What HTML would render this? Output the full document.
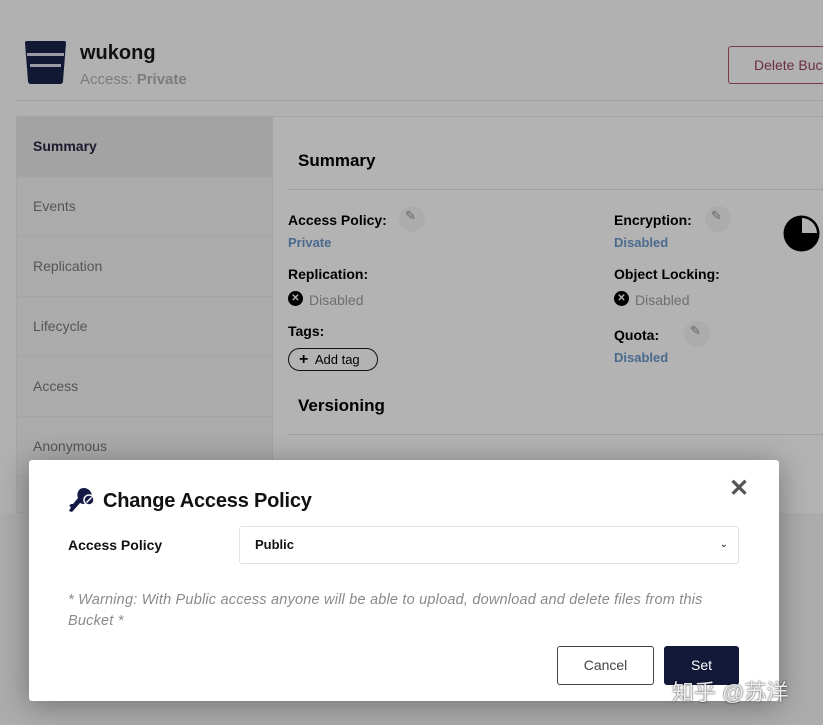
<!DOCTYPE html>
<html><head><meta charset="utf-8"><style>
*{margin:0;padding:0;box-sizing:border-box}
body{width:823px;height:725px;overflow:hidden;background:#b1b1b1;font-family:"Liberation Sans",Arial,sans-serif;position:relative;color:#000}
.abs{position:absolute}
.b{font-weight:bold}
.lab{font-size:14px;font-weight:bold;color:#000}
.blue{color:#4a6a8e;font-size:13px;font-weight:bold}
.dis{font-size:14px;color:#6e6e6e}
.pen{width:26px;height:26px;border-radius:50%;background:#acacac}
.xc{width:15px;height:15px;border-radius:50%;background:#000;color:#b1b1b1;font-size:10px;font-weight:bold;text-align:center;line-height:15px}
.side div{height:60px;border-bottom:1px solid #a5a5a5;padding-left:16px;line-height:58px;font-size:14px;color:#555}
</style></head><body>
<svg class="abs" style="left:24px;top:41px" width="43" height="43" viewBox="0 0 43 43"><path d="M1 2 Q1 0 3 0 H40 Q42 0 42 2 L39 40 Q39 43 36 43 H7 Q4 43 4 40 Z" fill="#111834"/><rect x="3" y="12" width="37" height="3" fill="#9a9aa6"/><rect x="6" y="23" width="31" height="3" fill="#9a9aa6"/></svg>
<div class="abs b" style="left:80px;top:42px;font-size:20px;color:#111">wukong</div>
<div class="abs" style="left:80px;top:71px;font-size:15px;color:#7b7b7b">Access: <b>Private</b></div>
<div class="abs" style="left:728px;top:46px;width:110px;height:38px;border:1px solid #7a3a44;border-radius:3px;color:#6b3040;font-size:14px;line-height:37px;padding-left:25px;white-space:nowrap">Delete Bucket</div>
<div class="abs" style="left:16px;top:100px;width:807px;height:1px;background:#a0a0a0"></div>
<div class="abs side" style="left:16px;top:116px;width:257px;height:397px;background:#ababab;border:1px solid #a5a5a5">
<div style="background:#a3a3a3;color:#1a1a2e;font-weight:bold">Summary</div>
<div>Events</div><div>Replication</div><div>Lifecycle</div><div>Access</div><div>Anonymous</div>
</div>
<div class="abs" style="left:273px;top:116px;width:550px;height:397px;background:#b3b3b3;border-top:1px solid #a5a5a5"></div>
<div class="abs b" style="left:298px;top:151px;font-size:17px">Summary</div>
<div class="abs" style="left:288px;top:189px;width:535px;height:1px;background:#a0a0a0"></div>
<div class="abs lab" style="left:288px;top:212px">Access Policy:</div>
<div class="abs pen" style="left:399px;top:206px"></div>
<div class="abs" style="left:405px;top:208px;font-size:13px;color:#666">✎</div>
<div class="abs blue" style="left:288px;top:235px">Private</div>
<div class="abs lab" style="left:288px;top:266px">Replication:</div>
<div class="abs xc" style="left:288px;top:291px">✕</div>
<div class="abs dis" style="left:309px;top:292px">Disabled</div>
<div class="abs lab" style="left:288px;top:323px">Tags:</div>
<div class="abs" style="left:288px;top:348px;width:90px;height:23px;border:1px solid #111;border-radius:12px;font-size:13px;line-height:21px;padding-left:10px"><b style="font-size:16px">+</b>&nbsp; Add tag</div>
<div class="abs lab" style="left:614px;top:212px">Encryption:</div>
<div class="abs pen" style="left:705px;top:206px"></div>
<div class="abs" style="left:711px;top:208px;font-size:13px;color:#666">✎</div>
<div class="abs blue" style="left:614px;top:235px">Disabled</div>
<svg class="abs" style="left:783px;top:215px" width="37" height="37"><circle cx="18.5" cy="18.5" r="18" fill="#000"/><path d="M19 3 A15.5 15.5 0 0 1 34 18 H19Z" fill="#b3b3b3"/></svg>
<div class="abs lab" style="left:614px;top:266px">Object Locking:</div>
<div class="abs xc" style="left:614px;top:291px">✕</div>
<div class="abs dis" style="left:635px;top:292px">Disabled</div>
<div class="abs lab" style="left:614px;top:327px">Quota:</div>
<div class="abs pen" style="left:684px;top:321px"></div>
<div class="abs" style="left:690px;top:323px;font-size:13px;color:#666">✎</div>
<div class="abs blue" style="left:614px;top:350px">Disabled</div>
<div class="abs b" style="left:298px;top:396px;font-size:17px">Versioning</div>
<div class="abs" style="left:288px;top:434px;width:535px;height:1px;background:#a0a0a0"></div>
<div class="abs" style="left:0;top:513px;width:823px;height:212px;background:#acacac"></div>
<div class="abs" style="left:29px;top:460px;width:750px;height:241px;background:#fff;border-radius:3px;box-shadow:0 4px 30px rgba(0,0,0,.35)">
<svg class="abs" style="left:39px;top:28px" width="28" height="26" viewBox="0 0 28 26"><path d="M12 1 a8 8 0 1 1 0 14 L4 24 L1 23 L3 19 L1 18 L3 16 L5 16 L10 10 a8 8 0 0 1 2 -9Z" fill="#141a45"/><circle cx="21" cy="12" r="5" fill="#141a45" stroke="#fff" stroke-width="1.5"/><path d="M18.5 14.5 L23.5 9.5" stroke="#fff" stroke-width="1.5"/></svg>
<div class="abs b" style="left:74px;top:30px;font-size:20px;color:#111;letter-spacing:-0.2px">Change Access Policy</div>
<div class="abs" style="left:700px;top:14px;font-size:24px;color:#555;font-weight:bold">✕</div>
<div class="abs b" style="left:39px;top:77px;font-size:14px;color:#111">Access Policy</div>
<div class="abs" style="left:210px;top:66px;width:500px;height:38px;border:1px solid #e2e2e2;border-radius:3px;font-size:13px;font-weight:bold;line-height:36px;padding-left:15px;color:#111">Public<span style="position:absolute;right:10px;top:0;font-size:10px;font-weight:normal">⌄</span></div>
<div class="abs" style="left:39px;top:130px;width:650px;font-size:14.5px;letter-spacing:0.2px;font-style:italic;color:#8a8a8a;line-height:21px">* Warning: With Public access anyone will be able to upload, download and delete files from this Bucket *</div>
<div class="abs" style="left:528px;top:186px;width:97px;height:39px;border:1px solid #444;border-radius:3px;text-align:center;line-height:37px;font-size:14px;color:#444">Cancel</div>
<div class="abs" style="left:635px;top:186px;width:75px;height:39px;background:#111838;border-radius:3px;text-align:center;line-height:39px;font-size:14px;color:#fff">Set</div>
</div>
<div class="abs" style="left:672px;top:675px;font-size:22px;color:rgba(255,255,255,.9);text-shadow:0 0 2px rgba(0,0,0,.6),0 0 1px rgba(0,0,0,.6);font-family:'Liberation Sans','Noto Sans CJK SC',sans-serif">知乎 @苏洋</div>
</body></html>
